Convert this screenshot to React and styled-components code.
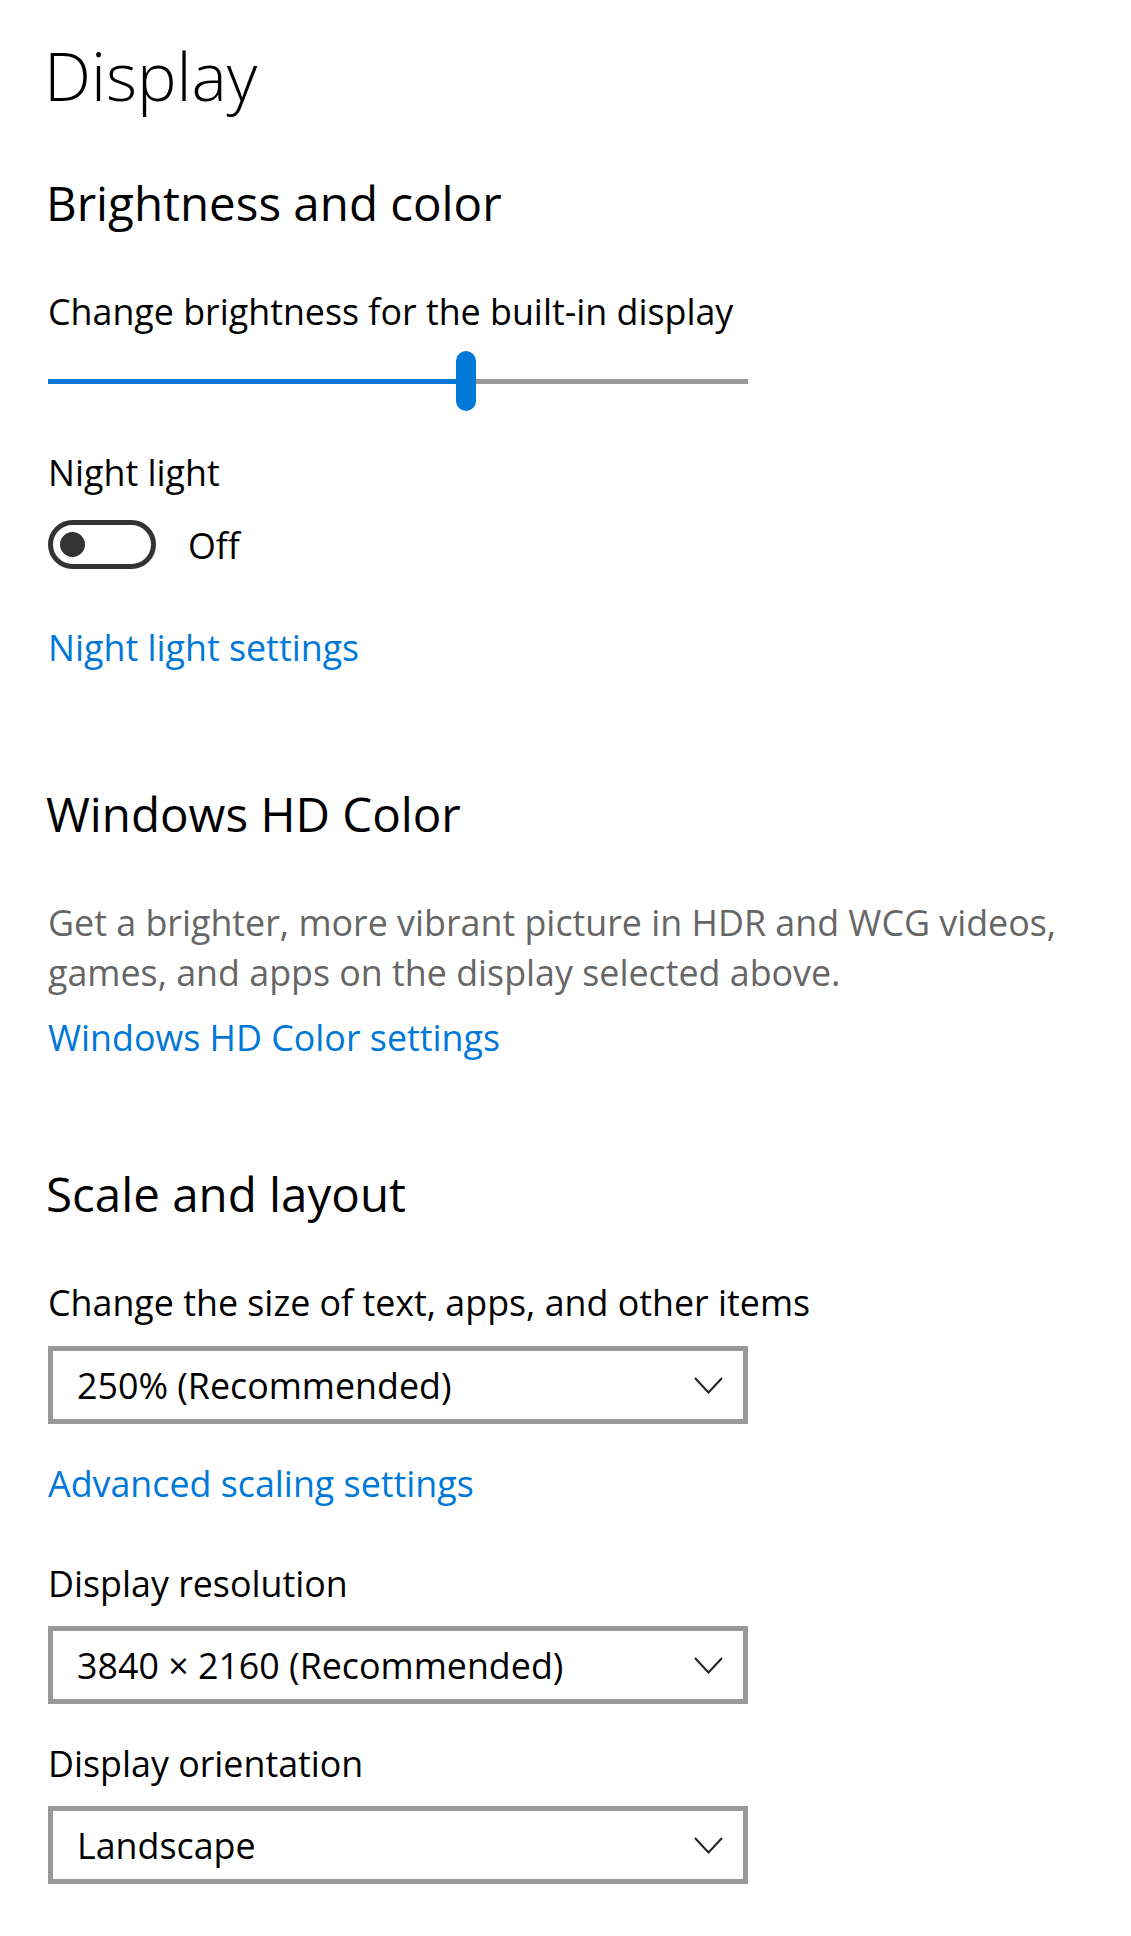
import React from 'react'
import styled, { createGlobalStyle } from 'styled-components'

const GlobalStyle = createGlobalStyle`
  html, body {
    margin: 0;
    padding: 0;
    background: #ffffff;
  }
  body {
    font-family: "Open Sans", "Noto Sans", sans-serif;
    color: #000000;
  }
`

const Page = styled.div`
  padding: 37px 0 30px 48px;
  display: flex;
  flex-direction: column;
  align-items: flex-start;
`

const Title = styled.h1`
  margin: 0 0 0 -4px;
  font-size: 66.5px;
  font-weight: 300;
  line-height: 77px;
`

const Subtitle = styled.h2`
  margin: ${p => p.$top}px 0 0 -2px;
  font-size: 47.5px;
  font-weight: 400;
  line-height: 53px;
`

const Label = styled.div`
  margin-top: ${p => p.$top}px;
  font-size: 35.8px;
  line-height: 40px;
`

const Link = styled.a`
  margin-top: ${p => p.$top}px;
  font-size: 35.8px;
  line-height: 40px;
  color: #0078d7;
  text-decoration: none;
  cursor: pointer;
`

const Desc = styled.p`
  margin: ${p => p.$top}px 0 0;
  font-size: 35.8px;
  line-height: 50px;
  color: #666666;
  max-width: 1075px;
`

const SliderWrap = styled.div`
  margin-top: 20px;
  width: 700px;
  height: 60px;
  position: relative;
  display: flex;
  align-items: center;
`

const Track = styled.div`
  width: 100%;
  height: 5px;
  background: #999999;
`

const Fill = styled.div`
  height: 100%;
  background: #0078d7;
`

const Thumb = styled.div`
  position: absolute;
  top: 0;
  width: 20px;
  height: 60px;
  border-radius: 10px;
  background: #0078d7;
  transform: translateX(-50%);
`

const ToggleRow = styled.div`
  margin-top: 28px;
  display: flex;
  align-items: center;
  gap: 32px;
`

const Toggle = styled.div`
  box-sizing: border-box;
  width: 108px;
  height: 49px;
  border: 5px solid #333333;
  border-radius: 25px;
  display: flex;
  align-items: center;
  padding-left: 7px;
`

const Knob = styled.div`
  width: 25px;
  height: 25px;
  border-radius: 50%;
  background: #333333;
`

const ToggleText = styled.span`
  font-size: 35.8px;
  line-height: 40px;
`

const Select = styled.div`
  box-sizing: border-box;
  margin-top: ${p => p.$top}px;
  width: 700px;
  height: 78px;
  border: 5px solid #999999;
  display: flex;
  align-items: center;
  justify-content: space-between;
  padding: 0 20px 0 24px;
  font-size: 35.8px;
  line-height: 40px;
`

const Chevron = () => (
  <svg width="29" height="17" viewBox="0 0 29 17" fill="none">
    <path d="M1 1 L14.5 15.5 L28 1" stroke="#222" strokeWidth="2" />
  </svg>
)

const Slider = ({ value }) => (
  <SliderWrap>
    <Track>
      <Fill style={{ width: `${value}%` }} />
    </Track>
    <Thumb style={{ left: `${value}%` }} />
  </SliderWrap>
)

const Dropdown = ({ top, children }) => (
  <Select $top={top}>
    <span>{children}</span>
    <Chevron />
  </Select>
)

export default function App() {
  return (
    <>
      <GlobalStyle />
      <Page>
        <Title>Display</Title>

        <Subtitle $top={62}>Brightness and color</Subtitle>
        <Label $top={62}>Change brightness for the built-in display</Label>
        <Slider value={59.7} />

        <Label $top={41}>Night light</Label>
        <ToggleRow>
          <Toggle>
            <Knob />
          </Toggle>
          <ToggleText>Off</ToggleText>
        </ToggleRow>
        <Link $top={58}>Night light settings</Link>

        <Subtitle $top={120}>Windows HD Color</Subtitle>
        <Desc $top={57}>
          Get a brighter, more vibrant picture in HDR and WCG videos, games, and apps on the display selected above.
        </Desc>
        <Link $top={20}>Windows HD Color settings</Link>

        <Subtitle $top={110}>Scale and layout</Subtitle>
        <Label $top={62}>Change the size of text, apps, and other items</Label>
        <Dropdown top={24}>250% (Recommended)</Dropdown>
        <Link $top={39}>Advanced scaling settings</Link>

        <Label $top={60}>Display resolution</Label>
        <Dropdown top={23}>3840 × 2160 (Recommended)</Dropdown>

        <Label $top={39}>Display orientation</Label>
        <Dropdown top={23}>Landscape</Dropdown>
      </Page>
    </>
  )
}
